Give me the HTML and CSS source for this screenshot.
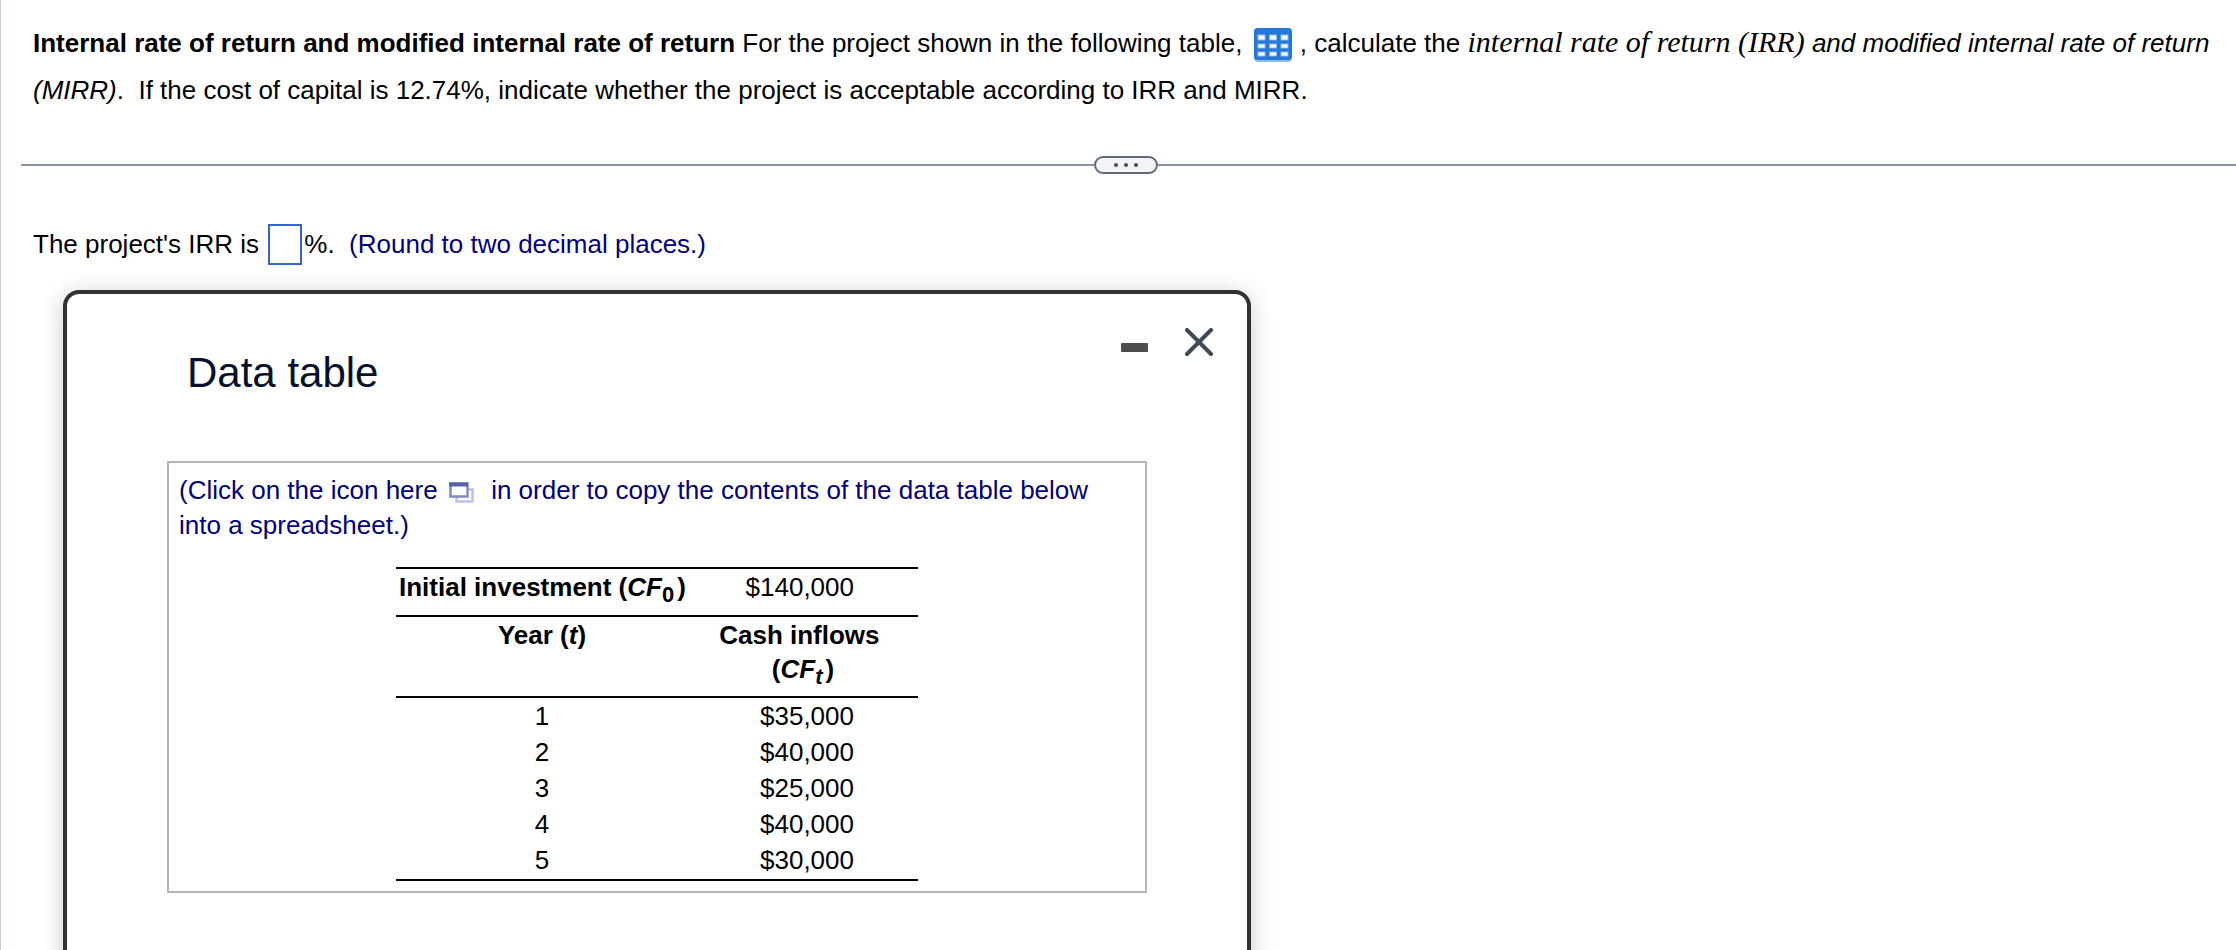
FILE: index.html
```html
<!DOCTYPE html>
<html lang="en">
<head>
    <meta charset="UTF-8">
    <meta name="viewport" content="width=device-width, initial-scale=1.0">
    <title>Internal rate of return</title>
    <link rel="stylesheet" href="styles.css">
</head>
<body>
    <!-- Question -->
    <p class="question">
        <b>Internal rate of return and modified internal rate of return</b> For the project shown in the following table,
        <button class="icon-btn table-btn" aria-label="Open data table">
            <svg width="38" height="34" viewBox="0 0 38 34">
                <rect width="38" height="34" rx="4" fill="#8fbcee"/>
                <rect width="38" height="32" rx="4" fill="#2577d8"/>
                <g fill="#fff" stroke="#8ab8ee" stroke-width="1">
                    <rect x="4" y="7" width="7" height="5"/>
                    <rect x="15.500" y="7" width="7" height="5"/>
                    <rect x="27" y="7" width="7" height="5"/>
                    <rect x="4" y="16" width="7" height="4"/>
                    <rect x="15.500" y="16" width="7" height="4"/>
                    <rect x="27" y="16" width="7" height="4"/>
                    <rect x="4" y="24" width="7" height="4"/>
                    <rect x="15.500" y="24" width="7" height="4"/>
                    <rect x="27" y="24" width="7" height="4"/>
                </g>
            </svg>
        </button>
        , calculate the <i class="term">internal rate of return (IRR)</i> <i>and modified internal rate of return (MIRR)</i>.&nbsp; If the cost of capital is 12.74%, indicate whether the project is acceptable according to IRR and MIRR.
    </p>

    <!-- Divider -->
    <div class="divider">
        <button class="more-btn" aria-label="Show more"><span></span><span></span><span></span></button>
    </div>

    <!-- Answer -->
    <div class="answer">
        <label for="irr">The project's IRR is</label>
        <input type="text" id="irr">%.&nbsp; <span class="hint">(Round to two decimal places.)</span>
    </div>

    <!-- Data table popup -->
    <section class="popup">
        <div class="popup-header">
            <h2>Data table</h2>
            <div class="popup-buttons">
                <button class="icon-btn" aria-label="Minimize">
                    <svg width="28" height="28" viewBox="0 0 28 28"><rect y="15" width="27" height="9" rx="1" fill="#4d4d4d"/></svg>
                </button>
                <button class="icon-btn" aria-label="Close">
                    <svg width="28" height="28" viewBox="0 0 28 28"><path d="M2 2L26 26M26 2L2 26" stroke="#3d4b59" stroke-width="4" stroke-linecap="round"/></svg>
                </button>
            </div>
        </div>
        <div class="popup-body">
            <p class="hint">
                (Click on the icon here
                <button class="icon-btn copy-btn" aria-label="Copy table">
                    <svg width="25" height="21" viewBox="0 0 25 21" fill="none">
                        <path d="M19 7.500H23.500V19.500H7.500V15" stroke="#bcc3e2" stroke-width="2.500"/>
                        <rect x="1.500" y="1.500" width="17" height="13" fill="#fff" stroke="#7f8bc4" stroke-width="2.500"/>
                        <path d="M0 2.500H19" stroke="#5563ab" stroke-width="4"/>
                    </svg>
                </button>
                in order to copy the contents of the data table below into a spreadsheet.)
            </p>
            <table class="data">
                <thead>
                    <tr class="initial">
                        <th>Initial investment (<i>CF</i><sub>0</sub>)</th>
                        <td>$140,000</td>
                    </tr>
                    <tr class="labels">
                        <th>Year (<i>t</i>)</th>
                        <th>Cash inflows&nbsp;<br>(<i>CF<sub>t</sub></i>)</th>
                    </tr>
                </thead>
                <tbody>
                    <tr><td>1</td><td>$35,000</td></tr>
                    <tr><td>2</td><td>$40,000</td></tr>
                    <tr><td>3</td><td>$25,000</td></tr>
                    <tr><td>4</td><td>$40,000</td></tr>
                    <tr><td>5</td><td>$30,000</td></tr>
                </tbody>
            </table>
        </div>
    </section>
</body>
</html>
```
FILE: styles.css
```css
* {
    box-sizing: border-box;
}
body {
    margin: 0;
    height: 100vh;
    overflow: hidden;
    border-left: 1px solid #c5c9d9;
    background: #fff;
    color: #000;
    font-family: "Liberation Sans", Arial, sans-serif;
    font-size: 26px;
}
p, h2 {
    margin: 0;
}
.question {
    padding: 20px 16px 0 32px;
    line-height: 47px;
}
.term {
    font-family: "Liberation Serif", "Times New Roman", serif;
    font-size: 30px;
    line-height: 30px;
}
.icon-btn {
    padding: 0;
    border: none;
    background: none;
    cursor: pointer;
}
.icon-btn svg {
    display: block;
}
.table-btn {
    margin: 0 1px 0 4px;
    vertical-align: -10px;
}
.divider {
    display: flex;
    align-items: center;
    margin: 42px 0 0 20px;
}
.divider::before, .divider::after {
    content: "";
    flex: 1;
    height: 2px;
    background: #8891a1;
}
.divider::after {
    flex: 1 1 6px;
}
.more-btn {
    display: flex;
    align-items: center;
    justify-content: center;
    gap: 6px;
    width: 64px;
    height: 18px;
    padding: 0;
    border: 2px solid #5f6b7b;
    border-radius: 9px;
    background: #f3f4f7;
}
.more-btn span {
    width: 4px;
    height: 4px;
    border-radius: 50%;
    background: #4d4d4d;
}
.answer {
    padding: 50px 32px 25px;
    line-height: 41px;
}
.answer input {
    width: 34px;
    height: 41px;
    margin: 0 2px;
    padding: 0 4px;
    border: 2px solid #3366cc;
    font: inherit;
    vertical-align: baseline;
}
.hint {
    color: #000080;
}
.popup {
    max-width: 1188px;
    margin-left: 62px;
    padding: 34px 100px 80px;
    border: 4px solid #303133;
    border-radius: 16px;
    background: #fff;
    box-shadow: 0 4px 24px rgba(0, 0, 0, 0.2);
}
.popup-header {
    display: flex;
    justify-content: space-between;
    align-items: flex-start;
    margin-right: -66px;
    padding-left: 20px;
}
.popup-header h2 {
    margin: 20px 0 63px;
    color: #05112a;
    font-size: 42px;
    font-weight: normal;
    line-height: 50px;
}
.popup-buttons {
    display: flex;
    gap: 36px;
}
.popup-body {
    padding: 10px;
    border: 2px solid #b5b5b5;
}
.popup-body .hint {
    line-height: 35px;
}
.copy-btn {
    margin: 0 10px 0 4px;
    vertical-align: -4px;
}
.data {
    width: 522px;
    margin: 24px auto 0;
    border-collapse: collapse;
    border-bottom: 2px solid #000;
    line-height: 34px;
    text-align: center;
}
.data th, .data td {
    padding: 1px 2px;
    vertical-align: top;
}
.data th:first-child, .data td:first-child {
    width: 292px;
}
.data td:last-child {
    padding-right: 64px;
    text-align: right;
}
.data .initial, .data .labels {
    border-top: 2px solid #000;
}
.data .initial th {
    padding-bottom: 11px;
    padding-left: 3px;
    text-align: left;
    white-space: nowrap;
}
.data .labels th {
    padding-bottom: 10px;
}
.data tbody tr:first-child {
    border-top: 2px solid #000;
}
.data tbody tr:last-child td {
    padding-bottom: 2px;
}
.data sub {
    margin-right: 3px;
    font-size: 22px;
    line-height: 0;
}
```
